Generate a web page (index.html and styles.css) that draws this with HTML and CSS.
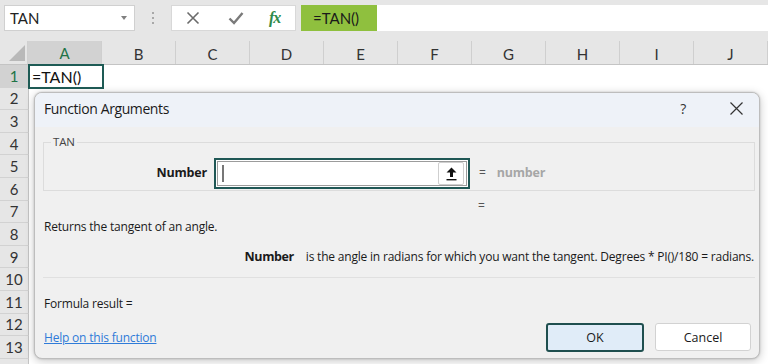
FILE: index.html
```html
<!DOCTYPE html>
<html>
<head>
<meta charset="utf-8">
<link rel="stylesheet" href="styles.css">
</head>
<body>
<div class="app">
  <div class="topbar">
    <div class="namebox"><span class="nb-text">TAN</span><span class="nb-arrow"></span></div>
    <div class="grip"><i></i><i></i><i></i></div>
    <div class="fxbox">
      <svg class="ic-x" width="14" height="14" viewBox="0 0 14 14"><path d="M1.5 1.5 L12.5 12.5 M12.5 1.5 L1.5 12.5" stroke="#6b6b6b" stroke-width="1.6" fill="none"/></svg>
      <svg class="ic-check" width="16" height="14" viewBox="0 0 16 14"><path d="M1.5 7.5 L6 12 L14.5 2" stroke="#7a7a7a" stroke-width="2.4" fill="none"/></svg>
      <span class="ic-fx">fx</span>
    </div>
    <div class="formula"><span class="formula-hl">=TAN()</span></div>
  </div>

  <div class="sheet">
    <div class="colhead">
      <div class="corner"><span class="tri"></span></div>
      <div class="ch active">A</div><div class="ch">B</div><div class="ch">C</div><div class="ch">D</div><div class="ch">E</div>
      <div class="ch">F</div><div class="ch">G</div><div class="ch">H</div><div class="ch">I</div><div class="ch">J</div>
    </div>
    <div class="row r1"><div class="rh active">1</div><div class="cells"><div class="a1">=TAN()</div></div></div>
    <div class="row"><div class="rh">2</div><div class="cells"></div></div>
    <div class="row"><div class="rh">3</div><div class="cells"></div></div>
    <div class="row"><div class="rh">4</div><div class="cells"></div></div>
    <div class="row"><div class="rh">5</div><div class="cells"></div></div>
    <div class="row"><div class="rh">6</div><div class="cells"></div></div>
    <div class="row"><div class="rh">7</div><div class="cells"></div></div>
    <div class="row"><div class="rh">8</div><div class="cells"></div></div>
    <div class="row"><div class="rh">9</div><div class="cells"></div></div>
    <div class="row"><div class="rh">10</div><div class="cells"></div></div>
    <div class="row"><div class="rh">11</div><div class="cells"></div></div>
    <div class="row"><div class="rh">12</div><div class="cells"></div></div>
    <div class="row"><div class="rh">13</div><div class="cells"></div></div>
    <div class="row"><div class="rh">14</div><div class="cells"></div></div>
  </div>

  <div class="dialog">
    <div class="dlg-title">
      <span class="dlg-name">Function Arguments</span>
      <span class="dlg-help">?</span>
      <svg class="dlg-close" width="13" height="13" viewBox="0 0 13 13"><path d="M0.5 0.5 L12.5 12.5 M12.5 0.5 L0.5 12.5" stroke="#333" stroke-width="1.2" fill="none"/></svg>
    </div>
    <div class="dlg-body">
      <div class="group">
        <span class="legend">TAN</span>
        <div class="argrow">
          <span class="arglabel">Number</span>
          <div class="arginput">
            <span class="caret"></span>
            <span class="refbtn">
              <svg width="11" height="14" viewBox="0 0 11 14"><path d="M5.5 0.5 L10.5 5.5 L7 5.5 L7 10 L4 10 L4 5.5 L0.5 5.5 Z" fill="#111"/><rect x="0.5" y="12" width="10" height="1.4" fill="#111"/></svg>
            </span>
          </div>
          <span class="eq">=</span>
          <span class="argval">number</span>
        </div>
      </div>
      <div class="eqrow"><span class="eq">=</span></div>
      <p class="desc">Returns the tangent of an angle.</p>
      <p class="argdesc"><b>Number</b><span>is the angle in radians for which you want the tangent. Degrees * PI()/180 = radians.</span></p>
      <div class="sep"></div>
      <p class="result">Formula result =</p>
      <div class="footer">
        <a class="help" href="#">Help on this function</a>
        <div class="btns">
          <button class="btn ok">OK</button>
          <button class="btn cancel">Cancel</button>
        </div>
      </div>
    </div>
  </div>
</div>
</body>
</html>
```

FILE: styles.css
```css
* { box-sizing: border-box; }
html, body { margin: 0; padding: 0; }
body {
  width: 768px; height: 364px; overflow: hidden;
  background: #e6e6e6;
  font-family: "Open Sans", "Noto Sans", sans-serif;
}
.app { position: relative; width: 768px; height: 364px; }

/* top formula bar */
.topbar {
  height: 41px; display: flex; align-items: flex-start;
  padding-top: 5px; background: #e6e6e6;
}
.namebox {
  margin-left: 4px; width: 131px; height: 26px; background: #fff;
  border: 1px solid #d0d0d0; display: flex; align-items: center;
  justify-content: space-between; padding: 0 7px 0 5px;
}
.nb-text { font-family: Lato, "Open Sans", sans-serif; font-size: 15px; color: #222; }
.nb-arrow {
  width: 0; height: 0; border-left: 3.5px solid transparent; border-right: 3.5px solid transparent;
  border-top: 4px solid #808080;
}
.grip { width: 36px; height: 26px; display: flex; flex-direction: column; align-items: center; justify-content: center; gap: 3px; }
.grip i { display: block; width: 2px; height: 2px; background: #a8a8a8; }
.fxbox {
  width: 125px; height: 26px; background: #fff; border: 1px solid #d8d8d8;
  display: flex; align-items: center; padding-left: 14px;
}
.ic-x { margin-right: 28px; }
.ic-check { margin-right: 25px; }
.ic-fx { font-family: "Liberation Serif", serif; font-style: italic; font-weight: bold; color: #2f8a4a; font-size: 16px; letter-spacing: -1px; }
.formula {
  flex: 1; margin-left: 5px; height: 26px; background: #fff; display: flex; align-items: stretch;
}
.formula-hl {
  width: 76px; background: #8fc03e; color: #1a1a1a; display: flex; align-items: center;
  padding-left: 12px; font-family: Lato, "Open Sans", sans-serif; font-size: 15px;
}

/* sheet */
.sheet { background: #fff; }
.colhead { display: flex; height: 24px; background: #e6e6e6; border-bottom: 1px solid #c4c4c4; }
.corner { width: 29px; position: relative; border-right: 1px solid #d0d0d0; }
.tri {
  position: absolute; right: 2px; bottom: 3px; width: 0; height: 0;
  border-left: 16px solid transparent; border-bottom: 16px solid #b9b9b9;
}
.ch {
  width: 74px; flex: none; border-right: 1px solid #cfcfcf; display: flex; align-items: center; justify-content: center;
  font-family: Lato, "Open Sans", sans-serif; font-size: 15px; color: #333; padding-top: 3px;
}
.ch.active { background: #d2d2d2; color: #217346; border-bottom: 2px solid #d2d2d2; }
.row { display: flex; height: 22.6px; }
.rh {
  width: 29px; flex: none; background: #e6e6e6; border-right: 1px solid #c4c4c4; border-bottom: 1px solid #d2d2d2;
  display: flex; align-items: center; justify-content: center;
  font-family: Lato, "Open Sans", sans-serif; font-size: 15px; color: #333;
}
.rh.active { background: #d2d2d2; color: #217346; }
.cells { flex: 1; background: #fff; position: relative; }
.a1 {
  position: absolute; left: -1px; top: -1px; width: 76px; height: 25px;
  border: 2px solid #1e5b55; font-family: Lato, "Open Sans", sans-serif; font-size: 16px; color: #111;
  display: flex; align-items: center; padding-left: 2px; background: #fff; z-index: 1;
}

/* dialog */
.dialog {
  position: absolute; left: 34px; top: 92px; width: 726px; height: 267px;
  background: #f0f0f0; border: 1px solid #bdbdbd; border-radius: 8px;
  box-shadow: 0 2px 10px rgba(0,0,0,0.22), 0 0 2px rgba(0,0,0,0.2); overflow: hidden;
  font-size: 12px; letter-spacing: -0.2px; color: #1a1a1a; z-index: 2;
}
.dlg-title {
  height: 34px; background: #eef2f8; display: flex; align-items: center; padding: 0 0 3px 9px;
}
.dlg-name { font-size: 14px; flex: 1; color: #1b1b1b; letter-spacing: -0.4px; }
.dlg-help { font-size: 14px; color: #333; margin-right: 44px; }
.dlg-close { margin-right: 16px; }
.dlg-body { padding: 15px 5px 0 8px; }
.group {
  position: relative; height: 49px; border: 1px solid #dcdcdc;
  width: 712px;
}
.legend {
  position: absolute; left: 7px; top: -9px; background: #f0f0f0; padding: 0 2px; font-size: 11.5px; color: #444;
}
.argrow { display: flex; align-items: flex-end; height: 100%; padding-bottom: 1px; }
.arglabel { width: 163px; text-align: right; font-weight: bold; font-size: 12.5px; align-self: center; margin-top: 12px; }
.arginput {
  margin-left: 7px; width: 256px; height: 31px; background: #fff; border: 2px solid #1f5755;
  box-shadow: inset 0 0 0 1px #fff, inset 0 0 0 2px #9c9c9c;
  display: flex; align-items: center; justify-content: space-between; padding: 0 4px 0 6px;
}
.caret { width: 2px; height: 17px; background: #777; }
.refbtn {
  width: 26px; height: 23px; background: #fff; border: 1px solid #cfcfcf; border-radius: 2px;
  display: flex; align-items: center; justify-content: center;
}
.eq { color: #555; font-size: 12px; }
.argrow .eq { margin-left: 9px; align-self: center; margin-top: 12px; }
.argval { margin-left: 11px; color: #a6a6a6; font-weight: bold; font-size: 12.5px; align-self: center; margin-top: 12px; }
.eqrow { height: 28px; display: flex; align-items: center; padding-left: 435px; }
.desc { margin: -3px 0 0; height: 22px; padding-left: 1px; line-height: 22px; }
.argdesc { margin: 11px 0 0; display: flex; justify-content: flex-end; padding-right: 0; line-height: 16px; }
.argdesc b { font-size: 12.5px; letter-spacing: -0.4px; margin-right: 12px; }
.sep { height: 1px; background: #e0e0e0; margin-top: 12px; width: 712px; }
.result { margin: 17px 0 0 1px; line-height: 17px; }
.footer { display: flex; justify-content: space-between; align-items: center; margin-top: 11px; }
.help { color: #2f7bd8; text-decoration: underline; padding-left: 1px; }
.btns { display: flex; gap: 11px; padding-right: 3px; }
.btn {
  font-family: inherit; font-size: 12.5px; color: #1a1a1a; height: 29px; border-radius: 3px; margin: 0; padding: 0;
}
.ok { width: 98px; background: #e0ecf8; border: 2px solid #1f4f4f; }
.cancel { width: 96px; height: 28px; background: #fff; border: 1px solid #d2d2d2; }
```
